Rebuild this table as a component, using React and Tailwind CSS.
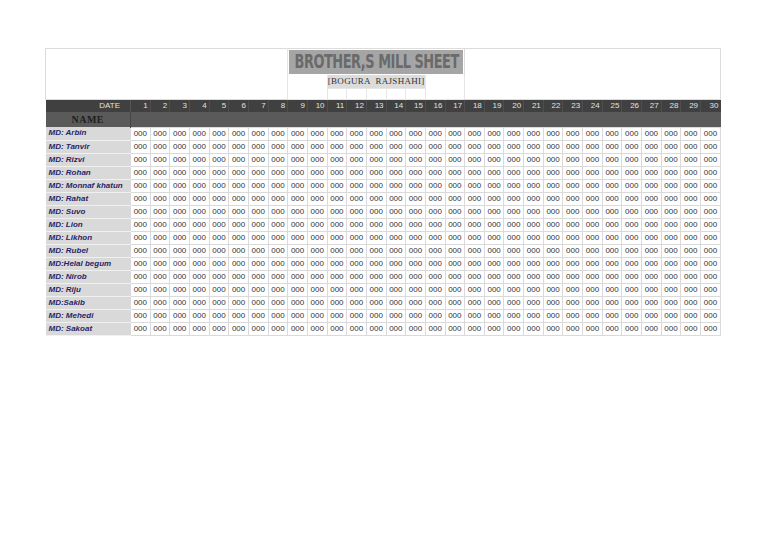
import React from "react";

const NAMES = [
  "MD: Arbin",
  "MD: Tanvir",
  "MD: Rizvi",
  "MD: Rohan",
  "MD: Monnaf khatun",
  "MD: Rahat",
  "MD: Suvo",
  "MD: Lion",
  "MD: Likhon",
  "MD: Rubel",
  "MD:Helal begum",
  "MD: Nirob",
  "MD: Riju",
  "MD:Sakib",
  "MD: Mehedi",
  "MD: Sakoat",
];

const DAYS = Array.from({ length: 30 }, (_, i) => i + 1);

export default function MillSheet() {
  return (
    <div className="min-h-screen bg-white pt-[48px] pl-[45px] font-['Liberation_Sans',Arial,sans-serif]">
      <table className="table-fixed border-collapse w-[676px] text-[8px] leading-none">
        <colgroup>
          <col className="w-[85px]" />
          {DAYS.map((d) => (
            <col key={d} />
          ))}
        </colgroup>
        <tbody>
          {/* title rows */}
          <tr className="h-[26px]">
            <td colSpan={9} rowSpan={3} className="border border-[#dcdcdc] border-r-[#e6e6e6]" />
            <td colSpan={9} className="border-x border-t border-[#dcdcdc] p-0 pt-[1px] align-top">
              <div className="mx-[1px] h-[24px] bg-[#a5a5a5] flex items-center justify-center overflow-hidden">
                <span className="font-['DejaVu_Sans_Condensed','DejaVu_Sans',sans-serif] font-bold text-[18px] text-[#6a6a6a] tracking-[-0.6px] scale-x-[0.8] scale-y-[1.05] whitespace-nowrap">
                  BROTHER,S MILL SHEET
                </span>
              </div>
            </td>
            <td colSpan={13} rowSpan={3} className="border border-[#dcdcdc] border-l-[#e6e6e6]" />
          </tr>
          <tr className="h-[13px]">
            <td colSpan={2} rowSpan={2} className="border-l border-b border-[#e6e6e6]" />
            <td colSpan={5} className="p-0 border-x border-[#e6e6e6]">
              <div className="h-[13px] bg-[#dcdcdc] flex items-center justify-center font-['Liberation_Serif',serif] text-[9px] text-[#333] tracking-[0.3px] whitespace-pre">
                [BOGURA  RAJSHAHI]
              </div>
            </td>
            <td colSpan={2} rowSpan={2} className="border-r border-b border-[#e6e6e6]" />
          </tr>
          <tr className="h-[11px]">
            {[11, 12, 13, 14, 15].map((d) => (
              <td key={d} className="border border-[#e6e6e6]" />
            ))}
          </tr>

          {/* date row */}
          <tr className="h-[13px] bg-[#404040] text-[#e0e0e0]">
            <td className="text-right pr-[10px] border-r border-[#555] text-[8px]">DATE</td>
            {DAYS.map((d) => (
              <td key={d} className="text-right pr-[2px] border-r border-[#4e4e4e] last:border-r-0">
                {d}
              </td>
            ))}
          </tr>

          {/* name row */}
          <tr className="h-[15px] bg-[#5a5a5a]">
            <td className="text-center border-r border-[#454545] font-['Liberation_Serif',serif] font-bold text-[10px] text-[#1e1e1e] tracking-[0.5px]">
              NAME
            </td>
            <td colSpan={30} />
          </tr>

          {/* data rows */}
          {NAMES.map((n) => (
            <tr key={n} className="h-[13px]">
              <td className="bg-[#d9d9d9] border-b border-[#f0f0f0] pl-[3px] font-bold italic text-[#262667] whitespace-nowrap overflow-hidden">
                {n}
              </td>
              {DAYS.map((d) => (
                <td
                  key={d}
                  className="border border-[#dadada] text-center text-[#333] text-[8px]"
                >
                  000
                </td>
              ))}
            </tr>
          ))}
        </tbody>
      </table>
    </div>
  );
}
